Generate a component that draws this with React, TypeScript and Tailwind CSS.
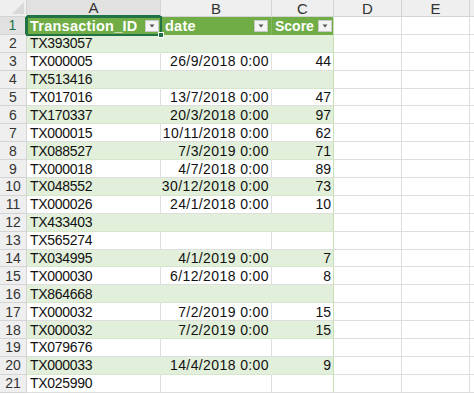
import React from "react";

type Row = [string, string, string];

const rows: Row[] = [
  ["TX393057", "", ""],
  ["TX000005", "26/9/2018 0:00", "44"],
  ["TX513416", "", ""],
  ["TX017016", "13/7/2018 0:00", "47"],
  ["TX170337", "20/3/2018 0:00", "97"],
  ["TX000015", "10/11/2018 0:00", "62"],
  ["TX088527", "7/3/2019 0:00", "71"],
  ["TX000018", "4/7/2018 0:00", "89"],
  ["TX048552", "30/12/2018 0:00", "73"],
  ["TX000026", "24/1/2018 0:00", "10"],
  ["TX433403", "", ""],
  ["TX565274", "", ""],
  ["TX034995", "4/1/2019 0:00", "7"],
  ["TX000030", "6/12/2018 0:00", "8"],
  ["TX864668", "", ""],
  ["TX000032", "7/2/2019 0:00", "15"],
  ["TX000032", "7/2/2019 0:00", "15"],
  ["TX079676", "", ""],
  ["TX000033", "14/4/2018 0:00", "9"],
  ["TX025990", "", ""],
];

function FilterBtn() {
  return (
    <div className="w-[14px] h-[12px] bg-[#f4f4f4] border border-[#c8c8c8] flex items-center justify-center shrink-0">
      <svg width="6" height="4" viewBox="0 0 6 4">
        <path d="M0.5 0.5 L5.5 0.5 L3 3.5 Z" fill="#555" />
      </svg>
    </div>
  );
}

export default function App() {
  const colHead = "h-[17px] bg-[#efefef] border-r border-b border-[#d4d4d4] flex items-center justify-center text-[15px] text-[#333] box-border";
  const rowHead = "h-[17.9px] bg-[#efefef] border-r border-b border-[#d4d4d4] flex items-center justify-center text-[14px] text-[#333] box-border";
  const outCell = "h-[17.9px] bg-white border-r border-b border-[#dedede] box-border";

  return (
    <div className="w-[474px] h-[394px] overflow-hidden bg-white font-['Liberation_Sans',Arial,sans-serif] leading-none">
      <div className="grid grid-cols-[27px_134px_111px_62px_68px_68px_1fr]">
        {/* column headers */}
        <div className="h-[17px] bg-[#efefef] border-r border-b border-[#d4d4d4] box-border relative flex items-end justify-end p-[2px]">
          <svg width="12" height="12" viewBox="0 0 12 12">
            <path d="M12 0 L12 12 L0 12 Z" fill="#d9d9d9" />
          </svg>
        </div>
        <div className="h-[17px] bg-[#e1e1e1] border-r border-b-2 border-[#d4d4d4] border-b-[#217346] flex items-center justify-center text-[15px] text-[#333] box-border">A</div>
        <div className={colHead}>B</div>
        <div className={colHead}>C</div>
        <div className={colHead}>D</div>
        <div className={colHead}>E</div>
        <div className="h-[17px] bg-[#efefef] border-b border-[#d4d4d4] box-border" />

        {/* row 1 header */}
        <div className="h-[17.9px] bg-[#e1e1e1] border-r-2 border-b border-[#d4d4d4] border-r-[#217346] flex items-center justify-center text-[14px] text-[#217346] box-border">1</div>
        <div className="h-[17.9px] bg-[#70ad47] relative flex items-center justify-between pl-[3px] pr-[2px] box-border">
          <span className="text-white font-bold text-[14.5px] tracking-[0.25px]">Transaction_ID</span>
          <FilterBtn />
          <div className="absolute left-[-1px] top-[-1px] right-[-1px] bottom-[-1px] border-2 border-[#217346] pointer-events-none" />
          <div className="absolute right-[-3px] bottom-[-3px] w-[6px] h-[6px] bg-[#217346] border border-white" />
        </div>
        <div className="h-[17.9px] bg-[#70ad47] border-r border-[#86b964] flex items-center justify-between pl-[4px] pr-[3px] box-border">
          <span className="text-white font-bold text-[14.5px] tracking-[0.25px]">date</span>
          <FilterBtn />
        </div>
        <div className="h-[17.9px] bg-[#70ad47] border-r border-[#c6dfb4] flex items-center justify-between pl-[3px] pr-[1px] box-border">
          <span className="text-white font-bold text-[14px]">Score</span>
          <FilterBtn />
        </div>
        <div className={outCell} />
        <div className={outCell} />
        <div className="h-[17.9px] border-b border-[#dedede] box-border" />

        {rows.map((r, i) => {
          const n = i + 2;
          const band = n % 2 === 0;
          const bg = band ? "bg-[#e2efda] border-[#e2efda] border-b-[#d6e6cb]" : "bg-white border-[#dedede]";
          return (
            <React.Fragment key={n}>
              <div className={rowHead}>{n}</div>
              <div className={`h-[17.9px] border-r border-b box-border flex items-center pl-[3px] text-[14px] tracking-[-0.3px] text-[#111] ${bg}`}>{r[0]}</div>
              <div className={`h-[17.9px] border-r border-b box-border flex items-center justify-end pr-[2px] text-[14px] tracking-[0.4px] text-[#111] ${bg}`}>{r[1]}</div>
              <div className={`h-[17.9px] border-r border-b box-border flex items-center justify-end pr-[2px] text-[14px] text-[#111] ${bg} border-r-[#c6dfb4]`}>{r[2]}</div>
              <div className={outCell} />
              <div className={outCell} />
              <div className="h-[17.9px] border-b border-[#dedede] box-border" />
            </React.Fragment>
          );
        })}
      </div>
    </div>
  );
}
